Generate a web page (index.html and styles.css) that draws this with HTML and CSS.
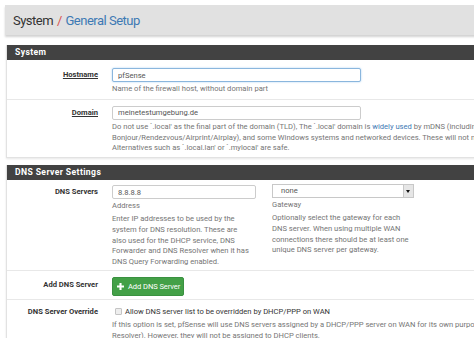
FILE: index.html
```html
<!DOCTYPE html>
<html lang="en">
<head>
  <meta charset="UTF-8">
  <meta name="viewport" content="width=device-width, initial-scale=1.0">
  <title>System / General Setup</title>
  <link rel="stylesheet" href="styles.css">
</head>
<body>
  <div class="page">
    <div class="breadcrumb">
      <span class="crumb">System</span>
      <span class="crumb-sep">/</span>
      <a class="crumb-link" href="#">General Setup</a>
    </div>

    <div class="panel">
      <div class="panel-heading">System</div>
      <div class="form-row row-host">
        <div class="row-label"><span class="linked">Hostname</span></div>
        <div class="row-field">
          <input class="form-control input-wide input-focus" type="text" value="pfSense">
          <div class="help">Name of the firewall host, without domain part</div>
        </div>
      </div>
      <div class="form-row row-domain">
        <div class="row-label"><span class="linked">Domain</span></div>
        <div class="row-field">
          <input class="form-control input-wide" type="text" value="meinetestumgebung.de">
          <div class="help nowrap">
            Do not use `.local' as the final part of the domain (TLD), The `.local' domain is <a href="#">widely used</a> by mDNS (including Avahi and Apple OS X's<br>
            Bonjour/Rendezvous/Airprint/Airplay), and some Windows systems and networked devices. These will not network correctly if the router uses `.local'.<br>
            Alternatives such as `.local.lan' or `.mylocal' are safe.
          </div>
        </div>
      </div>
    </div>

    <div class="panel">
      <div class="panel-heading">DNS Server Settings</div>
      <div class="form-row row-dns">
        <div class="row-label">DNS Servers</div>
        <div class="row-field split">
          <div class="split-col">
            <input class="form-control" type="text" value="8.8.8.8">
            <div class="help caption">Address</div>
            <div class="help">
              Enter IP addresses to be used by the<br>
              system for DNS resolution. These are<br>
              also used for the DHCP service, DNS<br>
              Forwarder and DNS Resolver when it has<br>
              DNS Query Forwarding enabled.
            </div>
          </div>
          <div class="split-col">
            <div class="select">
              <span>none</span>
              <span class="select-arrow"></span>
            </div>
            <div class="help caption">Gateway</div>
            <div class="help">
              Optionally select the gateway for each<br>
              DNS server. When using multiple WAN<br>
              connections there should be at least one<br>
              unique DNS server per gateway.
            </div>
          </div>
        </div>
      </div>
      <div class="form-row row-add">
        <div class="row-label label-btn">Add DNS Server</div>
        <div class="row-field">
          <button class="btn-success" type="button">
            <svg class="btn-icon" viewBox="0 0 10 10" width="7" height="7">
              <path d="M3.5 0h3v3.5H10v3H6.5V10h-3V6.5H0v-3h3.5z" fill="#fff"/>
            </svg>
            Add DNS Server
          </button>
        </div>
      </div>
      <div class="form-row row-override">
        <div class="row-label">DNS Server Override</div>
        <div class="row-field">
          <label class="check-line"><span class="checkbox"></span>Allow DNS server list to be overridden by DHCP/PPP on WAN</label>
          <div class="help nowrap">
            If this option is set, pfSense will use DNS servers assigned by a DHCP/PPP server on WAN for its own purposes (including the DNS Forwarder/DNS<br>
            Resolver). However, they will not be assigned to DHCP clients.
          </div>
        </div>
      </div>
    </div>
  </div>
</body>
</html>
```

FILE: styles.css
```css
html, body {
  margin: 0;
  padding: 0;
  background-color: #ffffff;
  overflow: hidden;
}
body {
  font-family: Roboto, "Liberation Sans", Arial, sans-serif;
  font-size: 7.6px;
  line-height: 10.8px;
  color: #333333;
}
.page {
  width: 640px;
  padding: 5px 0 0 5px;
}
.breadcrumb {
  background-color: #e1e1e1;
  height: 30px;
  line-height: 31px;
  padding-left: 8px;
  font-size: 13px;
  letter-spacing: -0.5px;
  box-shadow: 0 2px 2px rgba(0, 0, 0, 0.18);
  margin-bottom: 10px;
}
.crumb {
  color: #333333;
}
.crumb-sep {
  color: #d9534f;
  margin: 0 1px;
}
.crumb-link {
  color: #3d79b4;
  text-decoration: none;
}
.panel {
  margin-left: 1px;
  margin-bottom: 7px;
  background: #ffffff;
  border: 1px solid #e2e2e2;
  border-top: none;
  box-shadow: 0 1px 2px rgba(0, 0, 0, 0.1);
}
.panel-heading {
  background-color: #424242;
  color: #ffffff;
  font-weight: bold;
  font-size: 8.6px;
  letter-spacing: 0.4px;
  height: 15px;
  line-height: 15px;
  padding-left: 8px;
}
.form-row {
  display: flex;
  border-bottom: 1px solid #e8e8e8;
}
.row-host {
  padding: 8px 0 4px;
}
.row-domain {
  padding: 6px 0 3px;
  border-bottom: none;
}
.row-domain .help {
  margin-top: 2px;
}
.row-dns {
  padding: 5px 0 2px;
}
.row-add {
  padding: 6px 0 3px;
}
.row-override {
  padding: 5px 0 4px;
}
.row-label {
  width: 91px;
  flex-shrink: 0;
  text-align: right;
  font-weight: bold;
  line-height: 14px;
}
.linked {
  text-decoration: underline;
}
.label-btn {
  line-height: 16px;
}
.row-field {
  margin-left: 14px;
  flex: 1;
}
.form-control {
  display: block;
  box-sizing: border-box;
  height: 14px;
  width: 144px;
  padding: 0 5px;
  border: 1px solid #cccccc;
  border-radius: 2px;
  font-family: inherit;
  font-size: 7.6px;
  color: #555555;
  background: #ffffff;
}
.input-wide {
  width: 249px;
}
.input-focus {
  border-color: #8ab6dd;
  box-shadow: 0 0 2px rgba(102, 175, 233, 0.6);
}
.help {
  color: #757575;
  margin-top: 2px;
}
.help a {
  color: #3d79b4;
  text-decoration: none;
}
.nowrap {
  white-space: nowrap;
}
.caption {
  margin-top: 2px;
  margin-bottom: 1px;
}
.split {
  display: flex;
  gap: 16px;
}
.split-col {
  width: 144px;
}
.select {
  box-sizing: border-box;
  height: 14px;
  width: 142px;
  border: 1px solid #c8c8c8;
  display: flex;
  align-items: center;
  justify-content: space-between;
  padding-left: 8px;
  color: #555555;
  margin-top: -1px;
}
.select-arrow {
  width: 9px;
  height: 12px;
  background: #e6e6e6;
  border-left: 1px solid #c8c8c8;
  position: relative;
}
.select-arrow::after {
  content: "";
  position: absolute;
  left: 2px;
  top: 5px;
  border-left: 2.5px solid transparent;
  border-right: 2.5px solid transparent;
  border-top: 3px solid #111111;
}
.btn-success {
  display: flex;
  align-items: center;
  gap: 4px;
  height: 19px;
  padding: 0 3px 0 4px;
  background-color: #43a047;
  border: 1px solid #3a9140;
  border-radius: 2px;
  color: #ffffff;
  font-family: inherit;
  font-size: 7.6px;
  letter-spacing: -0.1px;
}
.check-line {
  display: flex;
  align-items: center;
  gap: 3px;
  line-height: 14px;
  color: #333333;
}
.checkbox {
  box-sizing: border-box;
  width: 7px;
  height: 7px;
  margin-left: 3px;
  border: 1px solid #c4c4c4;
  background: #eeeeee;
  border-radius: 1px;
}
.row-override .help {
  margin-top: 1px;
}
```
